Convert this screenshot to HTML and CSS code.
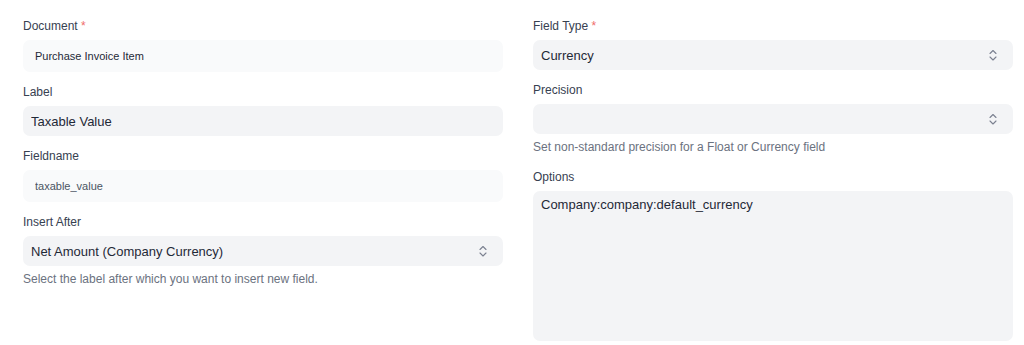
FILE: index.html
```html
<!DOCTYPE html>
<html lang="en">

<head>
    <meta charset="UTF-8">
    <meta name="viewport" content="width=device-width, initial-scale=1.0">
    <link rel="stylesheet" href="styles.css">
    <title>Add Custom Field</title>
</head>

<body>
    <div class="form">
        <div class="column">
            <div class="field">
                <label class="label">Document <span class="req">*</span></label>
                <input class="control readonly" type="text" value="Purchase Invoice Item" readonly>
            </div>
            <div class="field">
                <label class="label">Label</label>
                <input class="control" type="text" value="Taxable Value">
            </div>
            <div class="field">
                <label class="label">Fieldname</label>
                <input class="control readonly muted" type="text" value="taxable_value" readonly>
            </div>
            <div class="field">
                <label class="label">Insert After</label>
                <div class="select-wrap">
                    <select class="control select">
                        <option>Net Amount (Company Currency)</option>
                    </select>
                    <svg class="chevrons" width="16" height="16" viewBox="0 0 16 16" fill="none">
                        <path d="M5 6.5L8 3.5L11 6.5M5 10L8 13L11 10" stroke="#7b8190" stroke-width="1.1" stroke-linecap="round" stroke-linejoin="round" />
                    </svg>
                </div>
                <p class="help">Select the label after which you want to insert new field.</p>
            </div>
        </div>

        <div class="column">
            <div class="field">
                <label class="label">Field Type <span class="req">*</span></label>
                <div class="select-wrap">
                    <select class="control select">
                        <option>Currency</option>
                    </select>
                    <svg class="chevrons" width="16" height="16" viewBox="0 0 16 16" fill="none">
                        <path d="M5 6.5L8 3.5L11 6.5M5 10L8 13L11 10" stroke="#7b8190" stroke-width="1.1" stroke-linecap="round" stroke-linejoin="round" />
                    </svg>
                </div>
            </div>
            <div class="field">
                <label class="label">Precision</label>
                <div class="select-wrap">
                    <select class="control select">
                        <option></option>
                    </select>
                    <svg class="chevrons" width="16" height="16" viewBox="0 0 16 16" fill="none">
                        <path d="M5 6.5L8 3.5L11 6.5M5 10L8 13L11 10" stroke="#7b8190" stroke-width="1.1" stroke-linecap="round" stroke-linejoin="round" />
                    </svg>
                </div>
                <p class="help">Set non-standard precision for a Float or Currency field</p>
            </div>
            <div class="field">
                <label class="label">Options</label>
                <textarea class="control textarea">Company:company:default_currency</textarea>
            </div>
        </div>
    </div>
</body>

</html>
```

FILE: styles.css
```css
* {
    box-sizing: border-box;
}

body {
    margin: 0;
    background: #ffffff;
    font-family: "Liberation Sans", Arial, sans-serif;
    color: #1f2937;
}

.form {
    display: grid;
    grid-template-columns: 480px 480px;
    column-gap: 30px;
    padding: 18px 11px 0 23px;
}

.column {
    display: flex;
    flex-direction: column;
    gap: 12px;
}

.field {
    display: flex;
    flex-direction: column;
}

.label {
    display: block;
    font-size: 12px;
    line-height: 16px;
    color: #374151;
    margin-bottom: 6px;
}

.req {
    color: #ef6b6b;
}

.control {
    display: block;
    width: 100%;
    height: 30px;
    border: none;
    outline: none;
    border-radius: 7px;
    background: #f3f4f6;
    font-family: inherit;
    font-size: 13px;
    color: #1f2937;
    padding: 0 8px;
    margin: 0;
}

.readonly {
    height: 32px;
    background: #f9fafb;
    font-size: 11px;
    padding: 0 12px;
}

.muted {
    color: #4b5563;
}

.select-wrap {
    position: relative;
}

.select {
    appearance: none;
    -webkit-appearance: none;
    padding-right: 32px;
}

.chevrons {
    position: absolute;
    right: 12px;
    top: 7px;
    pointer-events: none;
}

.textarea {
    height: 150px;
    resize: none;
    padding: 6px 8px;
    line-height: 16px;
}

.help {
    margin: 5px 0 2px;
    font-size: 12px;
    line-height: 16px;
    color: #6b7280;
}
```
